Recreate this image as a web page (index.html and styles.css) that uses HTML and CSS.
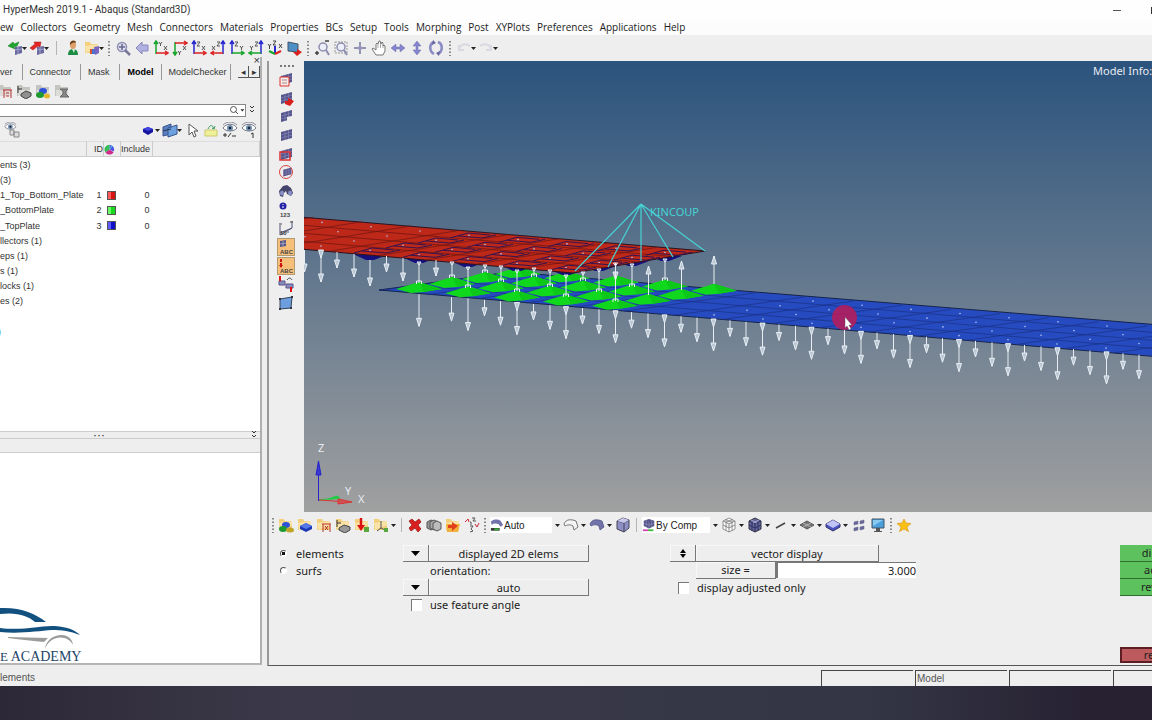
FILE: index.html
```html
<!DOCTYPE html>
<html lang="en">
<head>
    <meta charset="UTF-8">
    <meta name="viewport" content="width=device-width, initial-scale=1.0">
    <title>HyperMesh 2019.1 - Abaqus (Standard3D)</title>
    <link rel="stylesheet" href="styles.css">
</head>
<body>
    <svg class="defs" width="0" height="0">
        <symbol id="caret" viewBox="0 0 6 16"><path d="M1 7h5l-2.500 3z" fill="#222"/></symbol>
        <symbol id="grip" viewBox="0 0 4 16"><path d="M2 1v15" stroke="#666" stroke-width="1.500" stroke-dasharray="1.500 2"/></symbol>
        <symbol id="down" viewBox="0 0 9 5"><path d="M0 0h9L4.500 5z" fill="#000"/></symbol>
        <symbol id="folder" viewBox="0 0 16 16"><path d="M1 2h5l1 2h7v9H1z" fill="#f3cf7c"/><path d="M1 6l13-2v4L2 13z" fill="#fae3a8"/></symbol>
        <symbol id="graydoc" viewBox="0 0 16 16"><path d="M1 2h5l1 2h7v9H1z" fill="#c4c4c0"/><path d="M2 7h12v6H2z" fill="#dcdcd8"/></symbol>
        <symbol id="mesh" viewBox="0 0 16 16"><path d="M3 5l11-3v9L3 14z" fill="#55558c"/><path d="M3 8l11-3M3 11l11-3M7 4v9M10.500 3v9" stroke="#8d8dbd" stroke-width=".6"/></symbol>
        <symbol id="import" viewBox="0 0 16 16"><path d="M8 7l7-1v7l-7 2z" fill="#6a6aa0"/><path d="M8 10l7-1M11 7v7" stroke="#b5b5dc" stroke-width=".7"/><path d="M1 6l5-4 1 2 5-2-2 4-3 1 1 2z" fill="#1fa52d" stroke="#0e7a1c" stroke-width=".5"/></symbol>
        <symbol id="export" viewBox="0 0 16 16"><path d="M8 7l7-1v7l-7 2z" fill="#6a6aa0"/><path d="M8 10l7-1M11 7v7" stroke="#b5b5dc" stroke-width=".7"/><path d="M1 8l5-4-1-2 7 0-1 5-2-1-5 4z" fill="#e32626" stroke="#a11" stroke-width=".5"/></symbol>
        <symbol id="user" viewBox="0 0 16 16"><path d="M3 15c0-4 2-6 5-6s5 2 5 6z" fill="#1c8c42"/><path d="M7 9h3l-1 4z" fill="#d9efe0"/><ellipse cx="8" cy="5" rx="3" ry="4" fill="#dca068"/><path d="M5 5c-1-5 6-6 6-2-3-1-4 0-6 2z" fill="#6b3c18"/></symbol>
        <symbol id="rainbow" viewBox="0 0 16 16"><use href="#folder"/><path d="M8 9h3v5H8z" fill="#4473d1"/><path d="M10 7l5-1v7l-4 2z" fill="#7a64c0"/><path d="M6 9h2v5H6z" fill="#e05030"/></symbol>
        <symbol id="zoomfit" viewBox="0 0 16 16"><circle cx="7" cy="7" r="4.500" fill="#dfe1f2" stroke="#8d8db0" stroke-width="1.500"/><path d="M10 10l5 5" stroke="#77779c" stroke-width="2.500"/><path d="M7 4v6M4 7h6" stroke="#66668c" stroke-width="1.500"/></symbol>
        <symbol id="back" viewBox="0 0 16 16"><path d="M2 8l6-6v3h6v6H8v3z" fill="#b0b0e2" stroke="#8888bd"/></symbol>
        <symbol id="xyplus" viewBox="0 0 16 16"><path d="M3 14V2M1 4l2-3 2 3" stroke="#17a52b" stroke-width="1.500" fill="none"/><path d="M3 13h12M12 11l3 2-3 2" stroke="#d22" stroke-width="1.500" fill="none"/><path d="M6 2l1.500 2L9 2M7.500 4v2M11 6l3 4M14 6l-3 4" stroke="#555" fill="none"/></symbol>
        <symbol id="xyminus" viewBox="0 0 16 16"><path d="M3 2v12M1 12l2 3 2-3" stroke="#17a52b" stroke-width="1.500" fill="none"/><path d="M3 3h12M12 1l3 2-3 2" stroke="#d22" stroke-width="1.500" fill="none"/><path d="M6 11l1.500 2L9 11M7.500 13v2M11 6l3 4M14 6l-3 4" stroke="#555" fill="none"/></symbol>
        <symbol id="zx" viewBox="0 0 16 16"><path d="M3 14V2M1 4l2-3 2 3" stroke="#2727d0" stroke-width="1.500" fill="none"/><path d="M3 13h12M12 11l3 2-3 2" stroke="#d22" stroke-width="1.500" fill="none"/><path d="M6 2h3L6 6h3M11 6l3 4M14 6l-3 4" stroke="#555" fill="none"/></symbol>
        <symbol id="xz" viewBox="0 0 16 16"><path d="M13 14V2M11 4l2-3 2 3" stroke="#2727d0" stroke-width="1.500" fill="none"/><path d="M13 13H1M4 11l-3 2 3 2" stroke="#d22" stroke-width="1.500" fill="none"/><path d="M7 2h3L7 6h3M2 6l3 4M5 6l-3 4" stroke="#555" fill="none"/></symbol>
        <symbol id="zy" viewBox="0 0 16 16"><path d="M3 14V2M1 4l2-3 2 3" stroke="#2727d0" stroke-width="1.500" fill="none"/><path d="M3 13h12M12 11l3 2-3 2" stroke="#17a52b" stroke-width="1.500" fill="none"/><path d="M6 2h3L6 6h3M11 6l1.500 2L14 6M12.500 8v2" stroke="#555" fill="none"/></symbol>
        <symbol id="yz" viewBox="0 0 16 16"><path d="M13 14V2M11 4l2-3 2 3" stroke="#2727d0" stroke-width="1.500" fill="none"/><path d="M13 13H1M4 11l-3 2 3 2" stroke="#17a52b" stroke-width="1.500" fill="none"/><path d="M7 2h3L7 6h3M2 6l1.500 2L5 6M3.500 8v2" stroke="#555" fill="none"/></symbol>
        <symbol id="iso" viewBox="0 0 16 16"><path d="M8 14V6" stroke="#2727d0" stroke-width="2"/><path d="M8 14l-6-3" stroke="#17a52b" stroke-width="2"/><path d="M8 14l6-3" stroke="#d22" stroke-width="2"/><path d="M6 1h3L6 5h3M1 4l1.500 2L4 4M2.500 6v3M12 4l3 4M15 4l-3 4" stroke="#444" fill="none"/></symbol>
        <symbol id="viewred" viewBox="0 0 16 16"><path d="M2 2l10 2v8L2 11z" fill="#4c8fc4" stroke="#456"/><path d="M7 12h4V9l5 3-5 4z" fill="#d91e1e"/></symbol>
        <symbol id="zoomwin" viewBox="0 0 16 16"><circle cx="9" cy="7" r="4" fill="#eceefa" stroke="#8d8db0" stroke-width="1.500"/><path d="M12 10l3 5" stroke="#8d8db0" stroke-width="2"/><path d="M11 1h4M1 13h4M3 11v4" stroke="#444" stroke-width="1.500"/></symbol>
        <symbol id="zoombox" viewBox="0 0 16 16"><path d="M2 2h12v11H2z" fill="none" stroke="#999" stroke-dasharray="2 1"/><circle cx="8" cy="7" r="4" fill="#eceefa" stroke="#8d8db0" stroke-width="1.500"/><path d="M11 10l3 5" stroke="#8d8db0" stroke-width="2"/></symbol>
        <symbol id="center" viewBox="0 0 16 16"><path d="M8 2v12M2 8h12" stroke="#77779c" stroke-width="1.500"/><path d="M5 8l3-3 3 3-3 3z" fill="#9898c0"/></symbol>
        <symbol id="hand" viewBox="0 0 16 16"><path d="M5 15L1 9l1-1 3 2V4l1-1 1 1 1-3 1 0 1 3 1-2 1 1v3l1-1 1 1v5l-2 4z" fill="#fff" stroke="#777"/><path d="M7 4v4M9.500 3v5M12 5v3" stroke="#888" stroke-width=".7"/></symbol>
        <symbol id="leftright" viewBox="0 0 16 16"><path d="M1 8l5-4v3h4V4l5 4-5 4V9H6v3z" fill="#8484cf" stroke="#7272b0" stroke-width=".5"/></symbol>
        <symbol id="updown" viewBox="0 0 16 16"><path d="M8 1l4 5H9v4h3l-4 5-4-5h3V6H4z" fill="#8484cf" stroke="#7272b0" stroke-width=".5"/></symbol>
        <symbol id="spin" viewBox="0 0 16 16"><path d="M6 2C1 4 1 11 6 14M10 2c5 2 5 9 0 12" fill="none" stroke="#8a8ac4" stroke-width="2.500"/><path d="M5 0l3 3-4 2zM11 16l-3-3 4-2z" fill="#66669f"/></symbol>
        <symbol id="undo" viewBox="0 0 16 16"><path d="M3 9c1-5 7-6 11-3M3 5v5h5" fill="none" stroke="#d9d9e2" stroke-width="2"/></symbol>
        <symbol id="redo" viewBox="0 0 16 16"><path d="M13 9C12 4 6 3 2 6M13 5v5H8" fill="none" stroke="#d9d9e2" stroke-width="2"/></symbol>
        <symbol id="docx" viewBox="0 0 16 16"><use href="#graydoc"/><path d="M6 7h9M7 7v8M14 7v8M9 10h3M9 13h3" stroke="#b33" fill="none"/></symbol>
        <symbol id="doccube" viewBox="0 0 16 16"><use href="#graydoc"/><path d="M5 11l5-3 5 2v3l-5 3-5-3z" fill="#8f8f8f" stroke="#444"/><path d="M2 3v7M2 6h4" stroke="#333"/></symbol>
        <symbol id="docrgb" viewBox="0 0 16 16"><use href="#graydoc"/><ellipse cx="8" cy="8" rx="4" ry="3" fill="#2d52d8"/><ellipse cx="5" cy="12" rx="4" ry="3" fill="#1f9a30"/><ellipse cx="12" cy="13" rx="3" ry="2.500" fill="#e5b52c"/></symbol>
        <symbol id="docgray" viewBox="0 0 16 16"><use href="#graydoc"/><path d="M6 6h8l-2 2v3l3 3H6l3-3V8z" fill="#888" stroke="#666"/></symbol>
        <symbol id="eye" viewBox="0 0 16 16"><path d="M1 6c3-5 11-5 14 0-3 4-11 4-14 0z" fill="#fff" stroke="#778"/><circle cx="8" cy="6" r="3" fill="#6c8cac"/><circle cx="8" cy="6" r="1.200" fill="#223"/><path d="M1 3c4-4 10-4 14 0" fill="none" stroke="#889"/></symbol>
        <symbol id="eyepm" viewBox="0 0 16 16"><use href="#eye"/><path d="M1 13h4M3 11v4M6 15l3-4M10 14h4" stroke="#333"/></symbol>
        <symbol id="eye1" viewBox="0 0 16 16"><use href="#eye"/><path d="M10 12l2-1v5" fill="none" stroke="#333"/></symbol>
        <symbol id="eyedoc" viewBox="0 0 16 16"><g transform="scale(.8)"><use href="#eye" width="16" height="16"/></g><path d="M6 8h4v5H6zM10 10h5v5h-5z" fill="#ddd" stroke="#888"/></symbol>
        <symbol id="bluehex" viewBox="0 0 16 16"><path d="M3 7l5-2 5 2v3l-5 3-5-3z" fill="#1515a0"/><path d="M3 7l5-2 5 2-5 2z" fill="#4343df"/></symbol>
        <symbol id="bluecube" viewBox="0 0 16 16"><path d="M1 5l8-3v10l-8 2z" fill="#5b7fc2" stroke="#35558f"/><path d="M6 6l9-3v9l-9 3z" fill="#6da1df" stroke="#35558f"/><path d="M1 9l8-2" stroke="#234"/></symbol>
        <symbol id="pointer" viewBox="0 0 16 16"><path d="M5 2v11l3-3 2 5 2-1-2-5h4z" fill="#fff" stroke="#555"/></symbol>
        <symbol id="yellowbox" viewBox="0 0 16 16"><path d="M2 8h12v6H2z" fill="#eff09a" stroke="#ccc96a"/><path d="M5 7c2-5 5-4 6 0M11 7l-2-1M11 7l1-3" stroke="#3a9a5a" fill="none"/></symbol>
        <symbol id="color" viewBox="0 0 16 16"><path d="M8 8V1a7 7 0 0 1 6 10z" fill="#4c53e6"/><path d="M8 8l6 4a7 7 0 0 1-12 0z" fill="#cf2c8e"/><path d="M8 8l-6 4a7 7 0 0 1 6-11z" fill="#34bc55"/><path d="M8 8l4-6" stroke="#5fe"/></symbol>
        <symbol id="meshred" viewBox="0 0 16 16"><use href="#mesh"/><path d="M2 6h9v9H2z" fill="#f5eaea" stroke="#d33"/><path d="M4 9h5M4 12h5" stroke="#a88"/></symbol>
        <symbol id="mesharrow" viewBox="0 0 16 16"><use href="#mesh"/><path d="M7 11h3V8l6 3-4 5-5-2z" fill="#d91e1e"/></symbol>
        <symbol id="meshhalf" viewBox="0 0 16 16"><use href="#mesh"/><path d="M9 9l5-1v5l-5 1z" fill="#eee"/></symbol>
        <symbol id="meshbox" viewBox="0 0 16 16"><use href="#mesh"/><path d="M2 6h10v8H2z" fill="none" stroke="#d33" stroke-width="1.500"/></symbol>
        <symbol id="meshcircle" viewBox="0 0 16 16"><g transform="translate(3 2) scale(.75)"><use href="#mesh" width="16" height="16"/></g><circle cx="8" cy="8" r="6.500" fill="none" stroke="#d44"/></symbol>
        <symbol id="binoc" viewBox="0 0 16 16"><path d="M1 8l4-5 4-1 4 3 2 5-2 3-4-2-1-3-2 2-1 4-3-1z" fill="#44446c"/><ellipse cx="4" cy="10" rx="2" ry="2.500" fill="#8890c8"/><ellipse cx="12" cy="10" rx="2" ry="2.500" fill="#8890c8"/></symbol>
        <symbol id="info" viewBox="0 0 16 16"><circle cx="5" cy="4" r="3.500" fill="#2424a8"/><path d="M5 2v1M5 4v2" stroke="#fff"/></symbol>
        <symbol id="measure" viewBox="0 0 16 16"><path d="M2 5v10l12-7V1M2 13l12-5" fill="none" stroke="#55557c"/><path d="M1 4h3M12 2h3" stroke="#444"/></symbol>
        <symbol id="abcmesh" viewBox="0 0 16 16"><path d="M2 2l6-1v6l-6 1z" fill="#55558c"/><path d="M2 5l6-1M5 2v5" stroke="#bbc" stroke-width=".7"/></symbol>
        <symbol id="abcload" viewBox="0 0 16 16"><path d="M3 1v8" stroke="#c11" stroke-width="2" stroke-dasharray="3 1"/><path d="M1 7h4l-2 3z" fill="#c11"/></symbol>
        <symbol id="swap" viewBox="0 0 16 16"><path d="M1 5h6v4H1zM8 8h7v4H8z" fill="#8a8ab8" stroke="#55558c"/><path d="M2 0v5M13 11v5" stroke="#d11" stroke-width="2"/><path d="M9 4c2-3 4-2 5 0" fill="none" stroke="#444"/></symbol>
        <symbol id="quad" viewBox="0 0 16 16"><path d="M2 4l12-2-1 11-11 1z" fill="#6d9fe0" stroke="#345"/><path d="M1 3h2v2H1zM13 1h2v2h-2zM12 12h2v2h-2zM1 13h2v2H1z" fill="#334"/></symbol>
        <symbol id="fcomp" viewBox="0 0 16 16"><use href="#folder"/><ellipse cx="8" cy="8" rx="4" ry="3" fill="#2d52d8"/><ellipse cx="5" cy="12" rx="4" ry="3" fill="#1f9a30"/><ellipse cx="12" cy="13" rx="4" ry="2.500" fill="#bfa428"/></symbol>
        <symbol id="fblue" viewBox="0 0 16 16"><use href="#folder"/><path d="M3 9l6-3 6 3v3l-6 3-6-3z" fill="#1c37b4"/><path d="M3 9l6-3 6 3-6 3z" fill="#5578e8"/></symbol>
        <symbol id="fprop" viewBox="0 0 16 16"><use href="#folder"/><path d="M6 7h9M7 7v8M14 7v8M9 9l3 4M12 9l-3 4" stroke="#b33" fill="none"/></symbol>
        <symbol id="fcube" viewBox="0 0 16 16"><use href="#folder"/><path d="M4 11l5-3 6 2v3l-5 3-6-3z" fill="#999" stroke="#444"/><path d="M2 3v7M2 6h4" stroke="#333"/></symbol>
        <symbol id="fload" viewBox="0 0 16 16"><use href="#folder"/><path d="M7 1v8" stroke="#d11" stroke-width="2.500"/><path d="M3 8h8l-4 6z" fill="#d11"/><path d="M10 10h5v5h-5z" fill="#58a63c"/></symbol>
        <symbol id="fsys" viewBox="0 0 16 16"><use href="#folder"/><path d="M8 4v7l-4 3M8 11l4 2" stroke="#555" fill="none"/><path d="M11 11h4v4h-4z" fill="#58a63c"/></symbol>
        <symbol id="delete" viewBox="0 0 16 16"><path d="M2 4l3-2 3 3 4-3 2 3-3 3 3 4-3 3-3-4-4 3-2-3 3-3z" fill="#d92020" stroke="#911" stroke-width=".7"/></symbol>
        <symbol id="layers" viewBox="0 0 16 16"><path d="M1 5l4-2 4 2v6l-4 2-4-2z" fill="#999" stroke="#555"/><path d="M4 5l4-2 4 2v6l-4 2-4-2z" fill="#aaa" stroke="#555"/><path d="M7 6l4-2 4 2v6l-4 2-4-2z" fill="#bbb" stroke="#555"/></symbol>
        <symbol id="farrow" viewBox="0 0 16 16"><use href="#folder"/><path d="M1 7h14l-2 8H2z" fill="#f1b13c"/><path d="M3 8h4V5l6 4-6 5v-3H3z" fill="#e2401c"/></symbol>
        <symbol id="renum" viewBox="0 0 16 16"><path d="M1 5l3-3 1 3M15 6l-2 4-2-3" fill="none" stroke="#c23"/><path d="M8 1h3l-2 3h3M6 5l1 0v3M6 9h3l-2 3 2 2-3 1" fill="none" stroke="#555"/></symbol>
        <symbol id="surfsolid" viewBox="0 0 16 16"><path d="M1 7c2-5 7-5 12-3l2 6-4 3-1-4C7 7 4 8 2 9z" fill="#7373ab" stroke="#444c77" stroke-width=".7"/></symbol>
        <symbol id="surfwire" viewBox="0 0 16 16"><path d="M1 7c2-5 7-5 12-3l2 6-4 3-1-4C7 7 4 8 2 9z" fill="#f4f4f4" stroke="#555" stroke-width=".8"/></symbol>
        <symbol id="autoic" viewBox="0 0 16 16"><path d="M1 4c3-3 8-3 11-1l3 5-3 2-2-3C7 6 4 6 2 8z" fill="#7373ab"/><path d="M1 13h10" stroke="#333" stroke-width="3"/><path d="M5 13h5" stroke="#3b3" stroke-width="2"/></symbol>
        <symbol id="cube" viewBox="0 0 16 16"><path d="M2 4l6-3 6 2v8l-5 4-7-3z" fill="#8f8fc8" stroke="#445"/><path d="M2 4l7 2 5-3M9 6v9" fill="none" stroke="#445"/><path d="M2 4l6-3 6 2-5 3z" fill="#c8c8ef"/></symbol>
        <symbol id="bycomp" viewBox="0 0 16 16"><path d="M2 3l6-2 6 2v6l-6 3-6-3z" fill="#55558c"/><path d="M2 6l6 2 6-2M5 2v8M8 4v8M11 2v8" stroke="#aac" stroke-width=".5" fill="none"/><path d="M1 14h6" stroke="#d33fb0" stroke-width="2"/><path d="M7 14h6" stroke="#3b3" stroke-width="2"/></symbol>
        <symbol id="wirecube" viewBox="0 0 16 16"><path d="M2 4l6-3 6 3v8l-6 3-6-3zM2 4l6 3 6-3M8 7v8M2 8l6 3 6-3M5 2.500v11M11 2.500v11M5 5.500l6-3M11 5.500l-6-3" fill="#fff" stroke="#777" stroke-width=".8"/></symbol>
        <symbol id="meshcube" viewBox="0 0 16 16"><path d="M2 4l6-3 6 3v8l-6 3-6-3z" fill="#66669c" stroke="#334"/><path d="M2 4l6 3 6-3M8 7v8M2 8l6 3 6-3M5 5.500v8M11 5.500v8" fill="none" stroke="#222850" stroke-width=".8"/><path d="M4 3l6 3M12 3L6 6" stroke="#b8b8e0" stroke-width=".8"/></symbol>
        <symbol id="linei" viewBox="0 0 16 16"><path d="M3 11l9-5" stroke="#444" stroke-width="1.500"/></symbol>
        <symbol id="plate" viewBox="0 0 16 16"><path d="M1 8l7-4 7 4-7 4z" fill="#777" stroke="#555"/><path d="M4 6l8 4M4 10l8-4" stroke="#ccc" stroke-width=".7"/></symbol>
        <symbol id="blueplate" viewBox="0 0 16 16"><path d="M1 7l7-4 7 4v3l-7 4-7-4z" fill="#4a52c0" stroke="#336"/><path d="M1 7l7-4 7 4-7 4z" fill="#c0c4f6"/></symbol>
        <symbol id="shrink" viewBox="0 0 16 16"><path d="M3 5l4-1v3l-4 1zM9 4l4-1v3l-4 1zM3 11l4-1v3l-4 1zM9 10l4-1v3l-4 1z" fill="#66669c" stroke="#668" stroke-width=".5"/></symbol>
        <symbol id="monitor" viewBox="0 0 16 16"><path d="M2 2h12v9H2z" fill="#4ba0dc" stroke="#456"/><path d="M3 3h10L3 9z" fill="#8bcaf0"/><path d="M6 11h4v3h2v1H4v-1h2z" fill="#555"/></symbol>
        <symbol id="star" viewBox="0 0 16 16"><path d="M8 2l2 4 5 .5-4 3.500 1.500 4.500L8 12 3.500 14.500 5 10 1 6.500 6 6z" fill="#fcbf18" stroke="#d99c1c" stroke-width=".7"/></symbol>
        <symbol id="search" viewBox="0 0 10 10"><circle cx="4.500" cy="4.500" r="3" fill="none" stroke="#555"/><path d="M6 6l3 3" stroke="#555"/></symbol>
        <symbol id="chevrons" viewBox="0 0 8 10"><path d="M2 1l2 2 2-2M2 5l2 2 2-2" fill="none" stroke="#333"/></symbol>
    </svg>

    <header class="titlebar">
        <span>HyperMesh 2019.1 - Abaqus (Standard3D)</span>
        <div class="window-buttons"><i class="minimize"></i><i class="maximize"></i></div>
    </header>

    <nav class="menubar">
        <a href="#">ew</a><a href="#">Collectors</a><a href="#">Geometry</a><a href="#">Mesh</a><a href="#">Connectors</a><a href="#">Materials</a><a href="#">Properties</a><a href="#">BCs</a><a href="#">Setup</a><a href="#">Tools</a><a href="#">Morphing</a><a href="#">Post</a><a href="#">XYPlots</a><a href="#">Preferences</a><a href="#">Applications</a><a href="#">Help</a>
    </nav>

    <div class="toolbar top-toolbar" data-icons="import caret export caret | user rainbow caret : zoomfit back xyplus xyminus zx xz zy yz iso viewred : zoomwin zoombox center hand leftright updown spin : undo caret redo caret"></div>

    <div class="workspace">
        <aside class="browser">
            <button class="close" aria-label="Close">×</button>
            <div class="tabs">
                <button>ver</button>
                <button>Connector</button>
                <button>Mask</button>
                <button class="active">Model</button>
                <button>ModelChecker</button>
                <div class="tab-scroll"><button aria-label="Previous tab">◂</button><button aria-label="Next tab">▸</button></div>
            </div>
            <div class="toolbar view-toolbar" data-icons="docx doccube docrgb docgray"></div>
            <div class="search-row">
                <div class="search-box">
                    <input type="text" aria-label="Search">
                    <svg width="10" height="10"><use href="#search"/></svg>
                    <svg width="6" height="12"><use href="#caret"/></svg>
                </div>
                <svg width="8" height="10"><use href="#chevrons"/></svg>
            </div>
            <div class="filter-row">
                <div class="toolbar" data-icons="eyedoc"></div>
                <div class="toolbar" data-icons="bluehex caret bluecube caret pointer yellowbox eyepm eye1"></div>
            </div>
            <div class="tree">
                <table>
                    <thead>
                        <tr><th class="col-name"></th><th class="col-id">ID</th><th class="col-color"><svg width="11" height="11"><use href="#color"/></svg></th><th class="col-include">Include</th><th></th></tr>
                    </thead>
                    <tbody>
                        <tr><td>ents (3)</td><td></td><td></td><td></td><td></td></tr>
                        <tr><td>(3)</td><td></td><td></td><td></td><td></td></tr>
                        <tr><td>1_Top_Bottom_Plate</td><td>1</td><td><i class="swatch red"></i></td><td>0</td><td></td></tr>
                        <tr><td>_BottomPlate</td><td>2</td><td><i class="swatch green"></i></td><td>0</td><td></td></tr>
                        <tr><td>_TopPlate</td><td>3</td><td><i class="swatch blue"></i></td><td>0</td><td></td></tr>
                        <tr><td>llectors (1)</td><td></td><td></td><td></td><td></td></tr>
                        <tr><td>eps (1)</td><td></td><td></td><td></td><td></td></tr>
                        <tr><td>s (1)</td><td></td><td></td><td></td><td></td></tr>
                        <tr><td>locks (1)</td><td></td><td></td><td></td><td></td></tr>
                        <tr><td>es (2)</td><td></td><td></td><td></td><td></td></tr>
                    </tbody>
                </table>
                <span class="tree-more">)</span>
            </div>
            <div class="pane-split"><span>···</span><svg width="8" height="10"><use href="#chevrons"/></svg></div>
            <div class="pane-head"></div>
            <div class="pane">
                <svg class="logo" viewBox="0 15 84 45" width="84" height="45">
                    <path d="M0 17c20-1 35 5 46 14H35C28 25 18 21 0 23z" fill="#11507f"/>
                    <path d="M0 37c25 3 40-3 55-2 13 1 20 4 25 9-10-4-18-5-28-5-14 1-32 4-52 2z" fill="#11507f"/>
                    <path d="M8 46l40 1-4 4c-14-1-26-3-36-4zM45 58c2-17 27-19 28-4-5-10-22-11-28 4z" fill="#9a9c9c"/>
                </svg>
                <span class="brand">E ACADEMY</span>
            </div>
        </aside>

        <main class="main">
            <div class="stage">
                <div class="side-toolbar">
                    <i class="side-grip"></i>
                    <div class="side-icons" data-icons="meshred mesharrow meshhalf mesh meshbox meshcircle binoc info measure abcmesh abcload swap quad"></div>
                </div>
                <svg class="viewport" viewBox="304 61 848 451" preserveAspectRatio="xMinYMin slice">
                    <defs>
                        <linearGradient id="sky" x1="0" y1="0" x2="0" y2="1"><stop offset="0" stop-color="#2b537d"/><stop offset="1" stop-color="#a0a0a0"/></linearGradient>
                    </defs>
                    <rect x="304" y="61" width="848" height="452" fill="url(#sky)"/>
                    <polygon points="379,290 510,272 1160,325 1160,357" fill="#264bc0" stroke="#16244c"/>
                    <g id="blue-mesh" stroke="#1a3084" stroke-width=".7"></g>
                    <g id="pyramids"></g>
                    <g id="lower-arrows" stroke="#e8eef4"></g>
                    <g id="skirts" fill="#14107c"></g>
                    <polygon points="300,217 705,251 573,273 300,249" fill="#bd2818" stroke="#2c1420"/>
                    <g id="red-mesh" stroke="#6c1512" stroke-width=".7"></g>
                    <g id="upper-arrows" stroke="#e8eef4"></g>
                    <path d="M641 204L575 271M641 204L608 267M641 204V261M641 204L673 257M641 204L705 251" stroke="#45d3d3" stroke-width="1.200"/>
                    <text x="650" y="216" class="kincoup">KINCOUP</text>
                    <path d="M318.500 501V462" stroke="#2525c8"/><path d="M316 475l2.500-14 2.500 14z" fill="#3b3bd0" stroke="#2525c8"/>
                    <path d="M319 500l18-2" stroke="#2c4"/><path d="M328 499l9-3 3 2-8 1z" fill="#2c4" stroke="#2c4"/>
                    <path d="M319 500l30 2" stroke="#d33"/><path d="M338 499l14 3-14 2z" fill="#c55" stroke="#d33"/>
                    <text x="318" y="452" class="axis">Z</text>
                    <text x="345" y="495" class="axis">Y</text>
                    <text x="358" y="503" class="axis">X</text>
                    <text x="1093" y="75" class="axis">Model Info:</text>
                    <circle cx="844.500" cy="317.500" r="12.500" fill="#b01e60" opacity=".92"/>
                    <path d="M845 317v11l2-2 2 4 2-1-2-4h3z" fill="#fff" stroke="#444" stroke-width=".4"/>
                </svg>
            </div>

            <div class="toolbar bottom-toolbar">
                <div class="toolbar" data-icons=": fcomp fblue fprop fcube fload fsys caret | delete layers farrow renum :"></div>
                <div class="combo"><div class="combo-box auto"><svg width="14" height="14"><use href="#autoic"/></svg><select aria-label="Geometry colour"><option>Auto</option></select></div><svg width="6" height="16"><use href="#caret"/></svg></div>
                <div class="toolbar" data-icons="surfwire caret surfsolid caret cube |"></div>
                <div class="combo"><div class="combo-box comp"><svg width="14" height="14"><use href="#bycomp"/></svg><select aria-label="Element colour"><option>By Comp</option></select></div><svg width="6" height="16"><use href="#caret"/></svg></div>
                <div class="toolbar" data-icons="wirecube caret meshcube caret linei caret plate caret blueplate caret shrink monitor : star"></div>
            </div>

            <form class="panel" onsubmit="return false">
                <div class="group entity">
                    <label><input type="radio" name="entity" checked>elements</label>
                    <label><input type="radio" name="entity">surfs</label>
                </div>
                <div class="group selection">
                    <button class="switch" aria-label="Selection type"><svg width="9" height="5"><use href="#down"/></svg></button><button>displayed 2D elems</button>
                    <span class="caption">orientation:</span>
                    <button class="switch" aria-label="Orientation mode"><svg width="9" height="5"><use href="#down"/></svg></button><button>auto</button>
                    <label class="check"><input type="checkbox">use feature angle</label>
                </div>
                <div class="group display">
                    <button class="switch" aria-label="Display mode"><svg width="6" height="9" viewBox="0 0 6 9"><path d="M0 4l3-4 3 4zM0 5h6l-3 4z"/></svg></button><button>vector display</button>
                    <label class="size-label" for="size">size =</label><input type="text" id="size" value="3.000">
                    <label class="check"><input type="checkbox">display adjusted only</label>
                </div>
                <div class="actions">
                    <button>display</button>
                    <button>adjust</button>
                    <button>reverse</button>
                    <button class="return">return</button>
                </div>
            </form>
        </main>
    </div>

    <footer class="statusbar">
        <span class="message">lements</span>
        <span class="cell"></span>
        <span class="cell">Model</span>
        <span class="cell wide"></span>
        <span class="cell last"></span>
    </footer>
    <div class="taskbar"></div>

    <script>
        // Captions that sit under some of the icons
        const captions = { info: '123', measure: '10°', abcmesh: 'ABC', abcload: 'ABC' };

        // Fill the toolbars: "|" is a separator, ":" a grip, "caret" a drop-down arrow
        document.querySelectorAll('[data-icons]').forEach(bar => {
            bar.innerHTML = bar.dataset.icons.split(' ').map(name => {
                if (name === '|') return '<i class="separator"></i>';
                if (name === ':') return '<svg class="grip" width="4" height="16"><use href="#grip"/></svg>';
                if (name === 'caret') return '<svg class="caret" width="6" height="16"><use href="#caret"/></svg>';
                const caption = captions[name] ? `<text x="2" y="15" class="icon-text">${captions[name]}</text>` : '';
                return `<button class="tool ${name}" aria-label="${name}"><svg width="16" height="16"><use href="#${name}"/>${caption}</svg></button>`;
            }).join('');
        });

        const put = (id, html) => document.getElementById(id).innerHTML = html;
        const line = (x1, y1, x2, y2) => `<line x1="${x1}" y1="${y1}" x2="${x2}" y2="${y2}"/>`;
        const dot = (x, y) => `<circle cx="${x}" cy="${y}" r=".8" fill="#b9c4ee" stroke="none"/>`;
        const head = (x, y, dir) => `<path d="M${x - 2.5} ${y - 8 * dir}h5l-2.5 ${8 * dir}z" fill="#b9c6d4"/>`;
        const arrow = (x, y1, y2) => line(x, y1, x, y2) + head(x, y2, y2 > y1 ? 1 : -1);

        // Plate meshes, four elements deep
        let blue = '', red = '';
        for (let j = 1; j < 4; j++) {
            blue += line(379 + 33 * j, 290 - 4.6 * j, 1160, 357 - 8 * j);
            red += line(300, 249 - 8 * j, 573 + 33 * j, 273 - 5.5 * j);
        }
        for (let i = 0; i < 17; i++) {
            const x = 379 + 49 * i, y = 290.5 + 4.15 * i;
            blue += line(x, y, x + 131, y - 18.4);
            if (i > 5) for (let j = 0; j < 4; j++) blue += dot(x + 41 + 33 * j, y - .5 - 4.6 * j);
        }
        for (let i = -2; i < 6; i++) {
            const x = 280 + 49 * i, y = 247 + 4.3 * i;
            red += line(x, y, x + 131, y - 21);
            for (let j = 0; j < 4; j++) red += dot(x + 41 + 33 * j, y - 1 - 5 * j);
        }
        // Coupled faces showing through the upper plate
        for (let i = 0; i < 5; i++) for (let j = 0; j < 4; j++) {
            const x = 374 + 49 * i + 32 * j, y = 252 + 4.3 * i - 5 * j;
            red += `<path d="M${x - 20} ${y + 1}l18 -5l22 2M${x - 12} ${y - 1}l24 2l14 -3" fill="none" stroke="#351450" stroke-width="1"/>`;
        }
        put('blue-mesh', blue);
        put('red-mesh', red);

        let cones = '';
        for (let j = 3; j >= 0; j--) for (let i = 0; i < 5; i++) {
            const x = 419 + 49 * i + 33 * j, y = 283 + 4.2 * i - 5 * j;
            cones += `<path d="M${x - 23} ${y + 6}L${x} ${y - 1}L${x + 23} ${y + 6}L${x + 5} ${y + 9}L${x - 8} ${y + 10}z" fill="#10d81c"/>`
                + `<path d="M${x} ${y - 1}L${x + 23} ${y + 6}L${x + 5} ${y + 9}z" fill="#0dc819"/>`;
        }
        put('pyramids', cones);

        let lower = '';
        for (let k = -18; k < 27; k++) {
            if (k === -17) continue;
            const x = Math.round((713.5 + 16.37 * k) * 2) / 2;
            const y = 319 + 1.37 * k;
            const kind = (k + 18) % 3;
            lower += arrow(x, y, y + [32, 16, 24][kind]);
            if (kind === 0 && k > -13) lower += head(x, y + 8, 1);
        }
        put('lower-arrows', lower);

        put('skirts', [[370, 260], [419, 263], [468, 267], [517, 271], [566, 275], [599, 271], [632, 266], [665, 261]]
            .map(([x, y]) => `<path d="M${x - 17} ${y - 6}L${x - 4} ${y}h8L${x + 17} ${y - 5}z"/>`).join(''));

        const upper = [[304.5, 250, 272], [321, 251, 282], [337, 252, 268], [354, 254, 277], [370, 260, 286], [386.5, 256, 272],
            [403, 258, 281], [436, 260, 276], [648.5, 295, 266], [681.5, 290, 261], [714, 284, 256]];
        const tied = [[419, 262, 283], [452, 262, 277], [468, 267, 287], [485, 265, 272], [501, 266, 281], [517, 270, 291],
            [534, 268, 276], [550, 270, 286], [566, 275, 296], [583, 272, 280], [599, 269, 291], [615.5, 263, 301], [632, 264, 286], [665, 259, 280]];
        put('upper-arrows', upper.map(a => arrow(...a)).join('') + head(321, 258, 1) + head(615.5, 280, 1)
            + tied.map(([x, y1, y2]) => line(x, y1, x, y2) + `<path d="M${x - 2.5} ${y2 + 1}v-3h5v3M${x - 2} ${y1}h4l-2 3z" fill="none"/>`).join(''));
    </script>
</body>
</html>
```
FILE: styles.css
```css
body {
    font-family: 'Liberation Sans', Arial, sans-serif;
    font-size: 9px;
    margin: 0;
    height: 100vh;
    display: flex;
    flex-direction: column;
    overflow: hidden;
    background-color: #eeeeee;
    color: #333;
}
svg {
    display: block;
    flex-shrink: 0;
}
.defs {
    position: absolute;
}
button {
    font: inherit;
    color: inherit;
    padding: 0;
    border: none;
    background: none;
    flex-shrink: 0;
}
.icon-text {
    font: bold 6px 'Liberation Sans', sans-serif;
    fill: #444;
}

/* Title and menus */
.titlebar {
    display: flex;
    justify-content: space-between;
    height: 20px;
    line-height: 20px;
    padding-left: 3px;
    background: #fefefe;
    font-family: Roboto, sans-serif;
    font-size: 10px;
}
.window-buttons {
    display: flex;
    align-items: center;
    gap: 30px;
}
.minimize {
    width: 8px;
    height: 1px;
    background: #555;
}
.maximize {
    width: 1px;
    height: 7px;
    background: #333;
}
.menubar {
    display: flex;
    gap: 7px;
    height: 15px;
    line-height: 15px;
    background: #fcfcfc;
    font-family: 'Open Sans', sans-serif;
    font-size: 10px;
}
.menubar a {
    color: #222;
    text-decoration: none;
}

/* Toolbars */
.toolbar {
    display: flex;
    align-items: center;
    gap: 3px;
}
.tool {
    width: 16px;
    height: 16px;
}
.separator {
    width: 1px;
    height: 14px;
    margin: 0 5px;
    background: #b5b5b5;
}
.caret {
    margin-left: -2px;
}
.top-toolbar {
    height: 26px;
    padding-left: 7px;
}
.top-toolbar .grip {
    margin: 0 1px;
}
.top-toolbar .caret,
.filter-row .caret {
    margin: 0 -1px 0 -5px;
}

/* Layout */
.workspace {
    flex: 1;
    display: flex;
    min-height: 0;
}
.browser {
    width: 260px;
    flex-shrink: 0;
    display: flex;
    flex-direction: column;
    margin-bottom: 1px;
    margin-right: 5px;
    margin-top: -4px;
    border-right: 2px solid #b0b0b0;
    border-bottom: 2px solid #b5b5b5;
}
.close {
    align-self: flex-end;
    height: 6px;
    line-height: 6px;
    font-size: 11px;
}
.tabs {
    display: flex;
    align-items: center;
    height: 18px;
}
.tabs > button {
    height: 16px;
    padding: 0 9px 0 7px;
    border-right: 1px solid #999;
}
.tabs > button:first-child {
    padding-left: 0;
}
.tabs > button.active {
    font-weight: bold;
    color: #000;
    padding: 0 7px 0 8px;
}
.tabs > button:nth-child(5) {
    padding: 0 3px 0 7px;
}
.tab-scroll {
    display: flex;
    margin-left: auto;
}
.tab-scroll button {
    width: 11px;
    height: 12px;
    line-height: 10px;
    border-right: 1px solid #555;
    border-bottom: 1px solid #555;
}
.view-toolbar {
    height: 20px;
    margin-left: -3px;
}
.search-row {
    display: flex;
    align-items: center;
    gap: 2px;
    height: 18px;
}
.search-box {
    display: flex;
    align-items: center;
    width: 245px;
    height: 11px;
    background: #fff;
    border: 1px solid #888;
    border-left: none;
}
.search-box input {
    flex: 1;
    min-width: 0;
    height: 9px;
    padding: 0;
    border: none;
    background: none;
    font: inherit;
}
.filter-row {
    display: flex;
    justify-content: space-between;
    height: 22px;
    padding: 0 3px 0 4px;
}

/* Model tree */
.tree {
    height: 290px;
    background: #fff;
    border-bottom: 1px solid #ccc;
}
.tree table {
    width: 100%;
    height: 168px;
    table-layout: fixed;
    border-collapse: collapse;
}
.tree th,
.tree td {
    padding: 0;
    font-weight: normal;
    white-space: nowrap;
    text-align: left;
}
.tree th {
    height: 14px;
    background: #eeeeee;
    border-top: 1px solid #ddd;
    border-bottom: 1px solid #ccc;
    border-right: 1px solid #ccc;
}
.tree .col-name {
    width: 86px;
}
.tree .col-id {
    width: 16px;
    text-align: right;
}
.tree .col-color {
    width: 16px;
}
.tree .col-include {
    width: 31px;
}
.tree td:nth-child(2) {
    text-align: right;
    padding-right: 2px;
}
.tree td:nth-child(4) {
    text-align: right;
    padding-right: 3px;
}
.tree-more {
    display: block;
    width: 1px;
    margin-top: 18px;
    color: #3a9bb8;
    text-indent: -2px;
}
.swatch {
    display: block;
    width: 7px;
    height: 7px;
    margin-left: 3px;
    border: 1px solid #555;
}
.swatch.red {
    background: linear-gradient(90deg, #ff5a5a 40%, #d61414 40%);
}
.swatch.green {
    background: linear-gradient(90deg, #66ff66 40%, #18d81c 40%);
}
.swatch.blue {
    background: linear-gradient(90deg, #5a5aff 40%, #1010c8 40%);
}
.pane-split {
    display: flex;
    justify-content: space-between;
    align-items: center;
    height: 6px;
    padding: 0 2px 0 93px;
    font-size: 12px;
    line-height: 6px;
}
.pane-head {
    height: 13px;
    border-top: 1px solid #ccc;
    border-bottom: 1px solid #ccc;
}
.pane {
    flex: 1;
    display: flex;
    flex-direction: column;
    justify-content: flex-end;
    background: #fff;
}
.brand {
    font: 14px 'Liberation Serif', serif;
    line-height: 12px;
    color: #1e4568;
}
.brand::first-letter {
    font-size: 13px;
}

/* Viewport */
.main {
    flex: 1;
    min-width: 0;
    display: flex;
    flex-direction: column;
    border-left: 2px solid #999;
    border-bottom: 1px solid #555;
}
.stage {
    flex: 1;
    min-height: 0;
    display: flex;
}
.side-toolbar {
    width: 35px;
    flex-shrink: 0;
    display: flex;
    flex-direction: column;
    align-items: center;
}
.side-grip {
    width: 14px;
    margin: 4px 0 3px;
    border-top: 2px dotted #777;
}
.side-icons {
    display: flex;
    flex-direction: column;
    justify-content: space-between;
    height: 242px;
    margin-right: 2px;
}
.side-icons .tool {
    width: 18px;
    height: 18px;
    padding: 0 1px;
}
.side-icons .abcmesh,
.side-icons .abcload {
    background: #f7c07a;
    outline: 1px solid #b39a70;
    outline-offset: -1px;
}
.viewport {
    flex: 1;
    min-width: 0;
    height: 100%;
}
.kincoup {
    font: 11px 'Noto Sans', sans-serif;
    fill: #45d3d3;
}
.axis {
    font: 11px 'Noto Sans', sans-serif;
    fill: #e6ebf2;
}

/* Display toolbar */
.bottom-toolbar {
    height: 26px;
    padding-left: 2px;
}
.bottom-toolbar .separator {
    margin: 0 2px;
}
.combo {
    display: flex;
    align-items: center;
    gap: 2px;
}
.combo-box {
    display: flex;
    align-items: center;
    height: 16px;
    background: #fff;
}
.combo-box select {
    flex: 1;
    min-width: 0;
    height: 16px;
    padding: 0;
    border: none;
    background: none;
    appearance: none;
    font: 10px 'Liberation Sans', sans-serif;
    color: #222;
}
.auto {
    width: 62px;
}
.comp {
    width: 68px;
}

/* Command panel */
.panel {
    display: flex;
    height: 120px;
    padding-top: 7px;
    overflow: hidden;
    font-family: 'Noto Sans', sans-serif;
    font-size: 11px;
    line-height: 17px;
    color: #222;
}
.group {
    display: grid;
    grid-auto-rows: 17px;
    align-content: start;
}
.entity {
    width: 134px;
}
.entity label {
    display: flex;
    align-items: center;
    gap: 9px;
    padding-left: 11px;
}
.entity input {
    appearance: none;
    width: 7px;
    height: 7px;
    margin: 0;
    border-radius: 50%;
    border: 1px solid #fff;
    border-top-color: #555;
    border-left-color: #555;
    background: #fff;
}
.entity input:checked {
    background: radial-gradient(#111 40%, #fff 50%);
}
.group button,
.size-label {
    line-height: 15px;
    border-right: 1px solid #777;
    border-bottom: 1px solid #777;
    box-shadow: inset 1px 1px 0 #f8f8f8;
    text-align: center;
}
.switch svg {
    margin: 0 auto;
}
.selection {
    grid-template-columns: 26px 160px;
    width: 267px;
}
.caption {
    grid-column: 2;
    padding-left: 1px;
}
.check {
    grid-column: 1 / -1;
    display: flex;
    align-items: center;
    gap: 8px;
    padding-left: 8px;
}
.check input {
    appearance: none;
    width: 11px;
    height: 12px;
    margin: 0;
    background: #fff;
    border-top: 1px solid #777;
    border-left: 1px solid #777;
}
.display {
    grid-template-columns: 26px 80px 103px 37px;
}
.display button:nth-child(2) {
    grid-column: 2 / 4;
}
.size-label {
    grid-column: 2;
}
.display input[type="text"] {
    grid-column: 3 / 5;
    min-width: 0;
    box-sizing: border-box;
    height: 16px;
    padding: 0;
    border: none;
    border-top: 1px solid #777;
    border-left: 2px solid #777;
    background: #fff;
    font: inherit;
    color: inherit;
    text-align: right;
}
.actions {
    display: flex;
    flex-direction: column;
    width: 80px;
    margin-left: auto;
    margin-right: -48px;
    padding-bottom: 2px;
}
.actions button {
    height: 17px;
    line-height: 16px;
    background: #5dc25d;
    border-bottom: 1px solid #2e6e2e;
}
.actions .return {
    margin-top: auto;
    height: 16px;
    line-height: 12px;
    background: #bd5a5d;
    border: 2px solid #5c1e22;
}

/* Status bar */
.statusbar {
    display: flex;
    gap: 2px;
    height: 20px;
    font-size: 10px;
    line-height: 16px;
    color: #555;
}
.message {
    flex: 1;
    padding-top: 4px;
}
.cell {
    width: 90px;
    height: 15px;
    margin-top: 4px;
    padding-left: 1px;
    border-top: 1px solid #444;
    border-left: 1px solid #444;
}
.cell.wide {
    width: 100px;
}
.cell.last {
    width: 37px;
}
.taskbar {
    height: 34px;
    background: linear-gradient(90deg, #2d2838, #3b3949 25%, #343645 75%, #272132 95%);
}
```
